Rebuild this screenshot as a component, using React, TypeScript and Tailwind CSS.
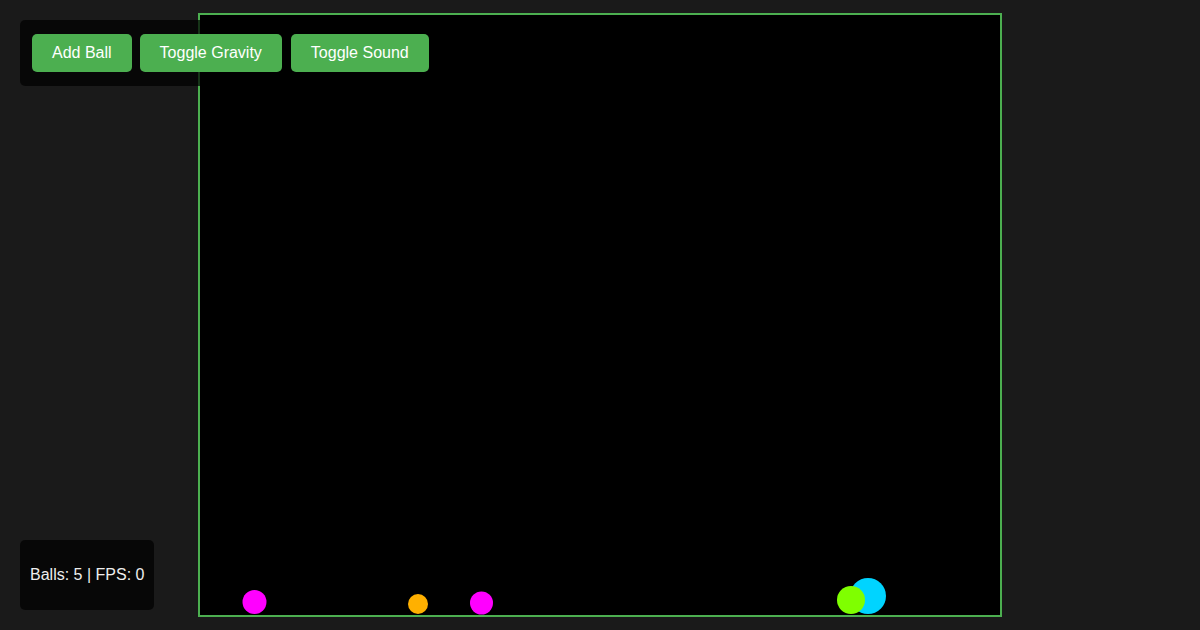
const balls = [
  { x: 54.5, y: 587, r: 12, color: "#ff00ff" },
  { x: 218, y: 589, r: 10, color: "#ffb000" },
  { x: 281.5, y: 588, r: 11.5, color: "#ff00ff" },
  { x: 668, y: 581, r: 18, color: "#00d4ff" },
  { x: 651, y: 585, r: 14, color: "#7fff00" },
];

export default function App() {
  return (
    <div className="relative w-full h-[630px] bg-[#1a1a1a] flex items-center justify-center overflow-hidden font-['Liberation_Sans',Arial,sans-serif]">
      {/* play area */}
      <div className="border-2 border-[#4caf50] bg-black">
        <svg width="800" height="600" className="block">
          {balls.map((b, i) => (
            <circle key={i} cx={b.x} cy={b.y} r={b.r} fill={b.color} />
          ))}
        </svg>
      </div>

      <div className="absolute top-5 left-5 flex gap-2 px-3 py-[14px] bg-black/70 rounded-[5px]">
        <button className="px-5 py-2.5 bg-[#4caf50] text-white text-base leading-[18px] rounded-[5px]">Add Ball</button>
        <button className="px-5 py-2.5 bg-[#4caf50] text-white text-base leading-[18px] rounded-[5px]">Toggle Gravity</button>
        <button className="ml-px px-5 py-2.5 bg-[#4caf50] text-white text-base leading-[18px] rounded-[5px]">Toggle Sound</button>
      </div>

      <div className="absolute bottom-5 left-5 h-[70px] px-2.5 flex items-center bg-black/70 rounded-[5px] text-[#eeeeee] text-base">
        Balls: 5 | FPS: 0
      </div>
    </div>
  );
}
